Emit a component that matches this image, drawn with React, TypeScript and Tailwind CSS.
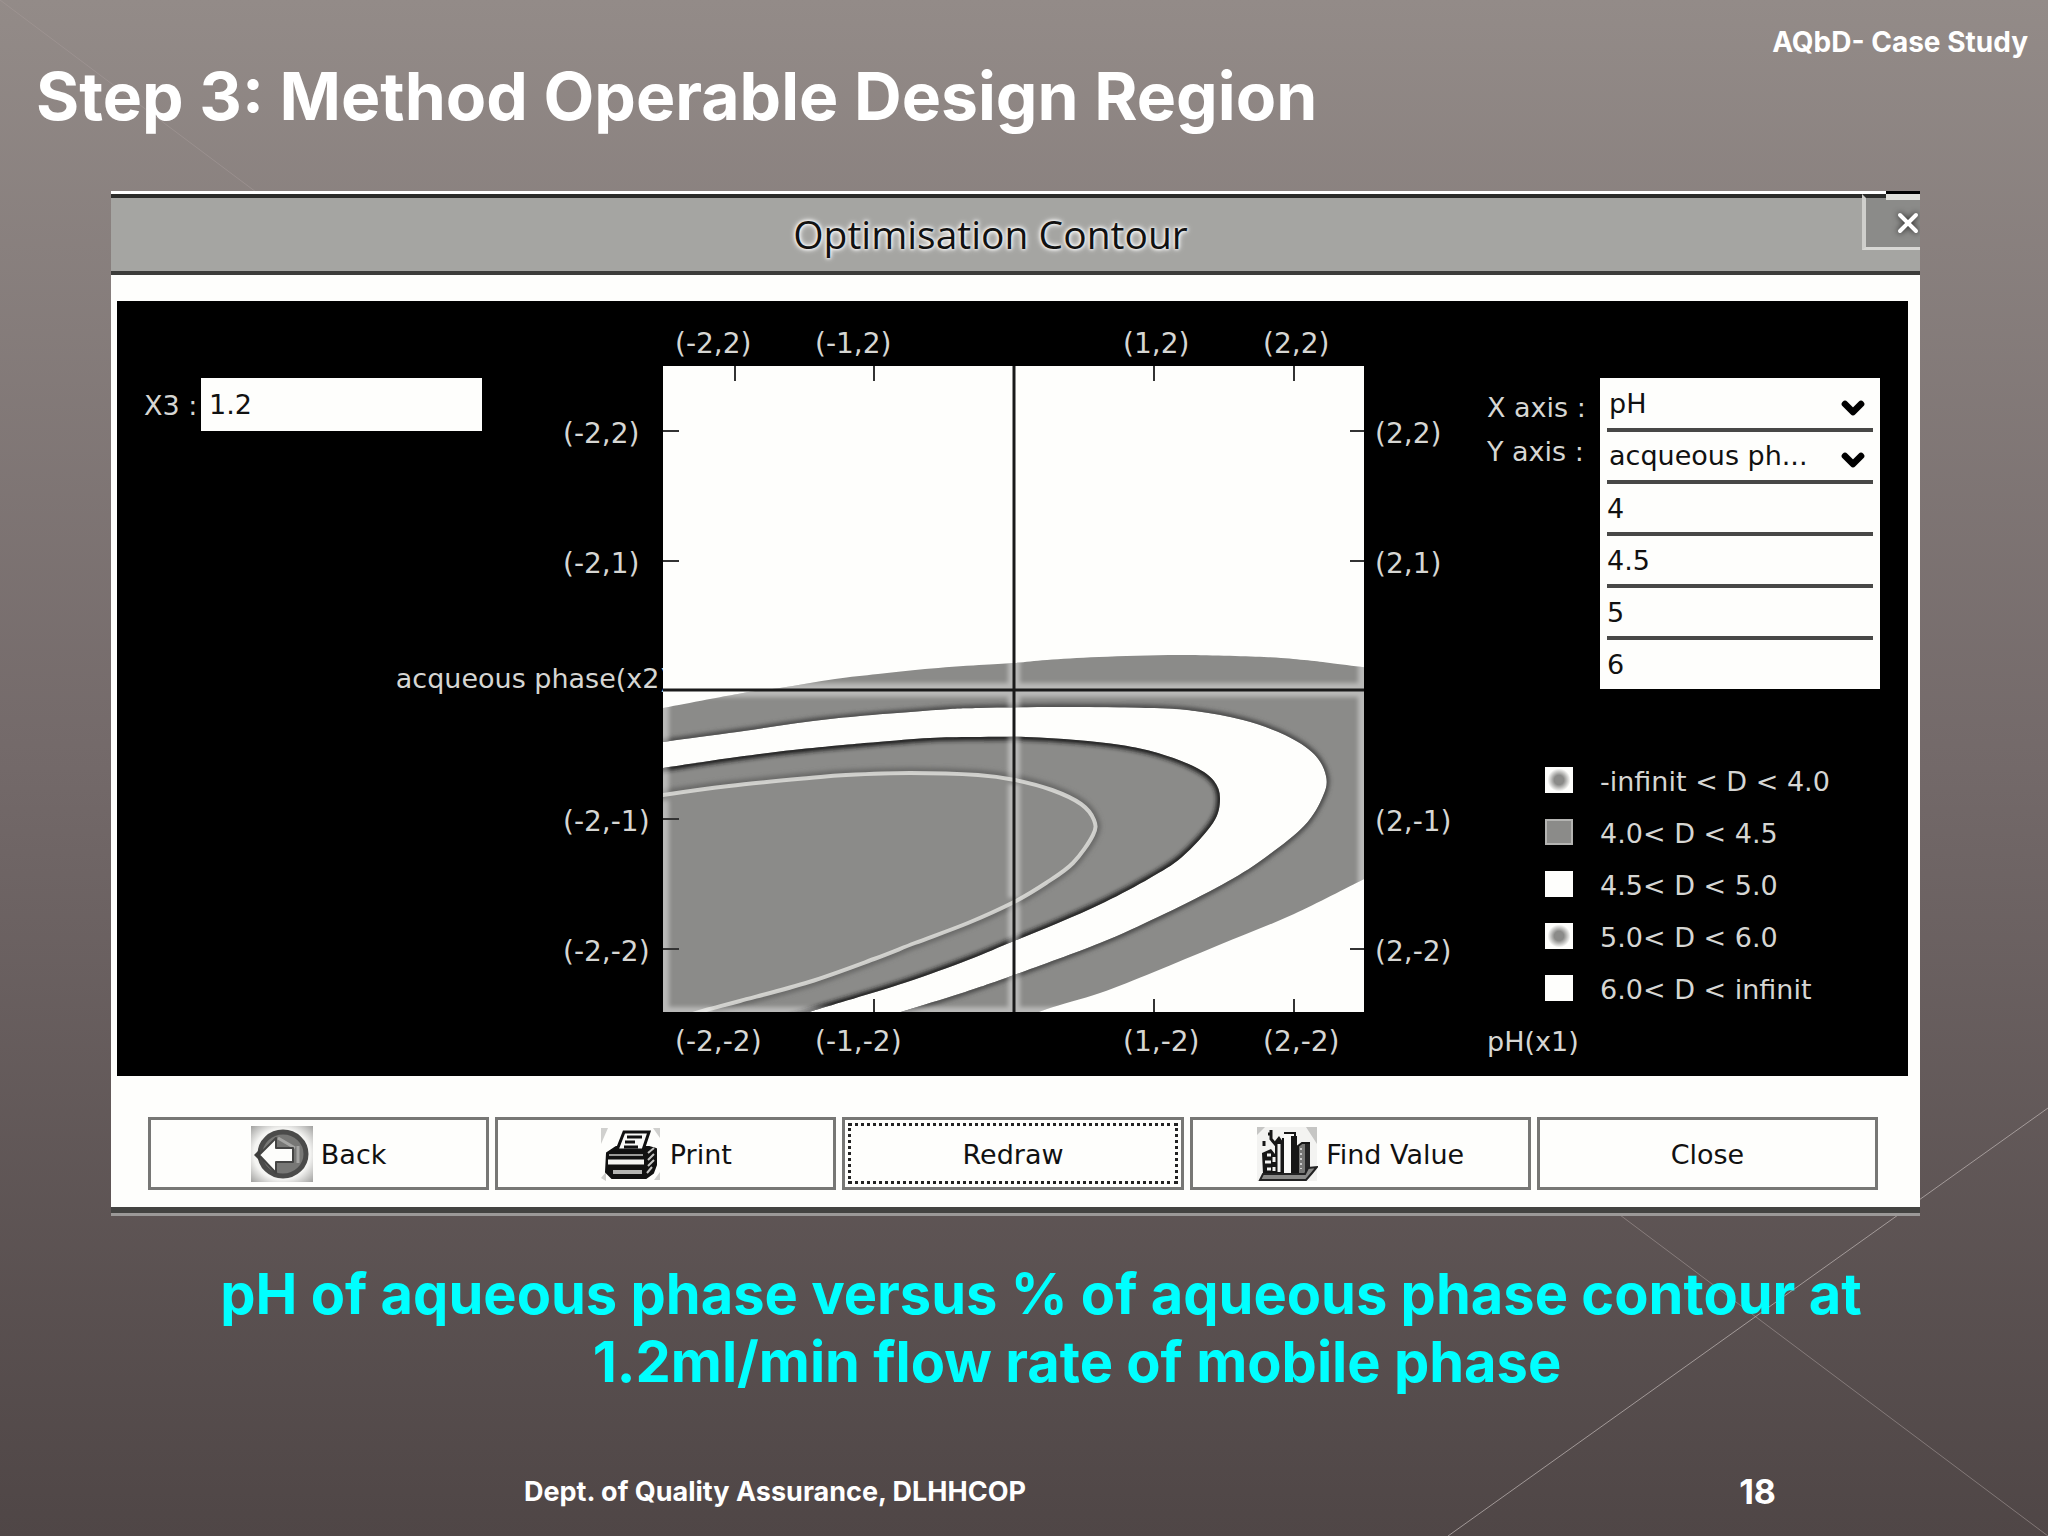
import { useState } from "react";
import type { ReactNode } from "react";
import { ChevronDown, X } from "lucide-react";

// ---------------------------------------------------------------------------
// Contour data (chart units)
// ---------------------------------------------------------------------------

type Point = [number, number];

const PLOT = { left: 663, right: 1364, top: 366, bottom: 1012, midX: 1014, midY: 690 };

const OUTER_TOP: Point[] = [
  [655, 710], [663, 708], [743, 693], [780, 688], [835, 679], [878, 674], [925, 669],
  [979, 665], [1014, 663], [1047, 660], [1099, 657], [1179, 655], [1264, 657],
  [1304, 660], [1330, 663], [1370, 668],
];

const OUTER_BOTTOM: Point[] = [
  [1370, 876], [1294, 914], [1219, 945], [1154, 972], [1100, 993], [1047, 1009], [1020, 1020],
];

const WHITE_BAND: Point[] = [
  [650, 745], [663, 742], [729, 733], [830, 719], [936, 710], [979, 708], [1060, 707],
  [1150, 708], [1195, 711], [1243, 720], [1285, 735], [1314, 754], [1326, 776],
  [1323, 796], [1304, 826], [1259, 862], [1216, 888], [1158, 917], [1100, 943],
  [1014, 975], [962, 993], [904, 1011], [880, 1019],
];

const INNER_BAND: Point[] = [
  [650, 771], [663, 768], [737, 757], [793, 750], [843, 745], [878, 742], [930, 738],
  [973, 737], [1026, 737], [1076, 740], [1121, 745], [1158, 753], [1195, 767],
  [1214, 781], [1220, 799], [1213, 823], [1182, 857], [1150, 878], [1105, 902],
  [1058, 923], [1014, 941], [968, 960], [904, 983], [819, 1009], [790, 1018],
];

const CORE: Point[] = [
  [650, 798], [663, 795], [729, 786], [809, 778], [846, 775], [910, 773], [978, 775],
  [1015, 780], [1052, 790], [1081, 804], [1094, 820], [1093, 835], [1073, 863],
  [1046, 883], [1014, 902], [968, 923], [915, 943], [874, 959], [809, 982],
  [740, 1001], [706, 1010], [680, 1018],
];

// Catmull-Rom spline through the points
function smooth(points: Point[], start = "M") {
  let d = `${start}${points[0][0]} ${points[0][1]}`;
  for (let i = 0; i < points.length - 1; i++) {
    const p0 = points[i - 1] ?? points[i];
    const p1 = points[i];
    const p2 = points[i + 1];
    const p3 = points[i + 2] ?? p2;
    d += `C${p1[0] + (p2[0] - p0[0]) / 6} ${p1[1] + (p2[1] - p0[1]) / 6} `;
    d += `${p2[0] - (p3[0] - p1[0]) / 6} ${p2[1] - (p3[1] - p1[1]) / 6} ${p2[0]} ${p2[1]}`;
  }
  return d;
}

const outerPath = smooth(OUTER_TOP) + smooth(OUTER_BOTTOM, "L") + "L650 1020Z";
const whitePath = smooth(WHITE_BAND) + "L650 1020Z";
const innerPath = smooth(INNER_BAND) + "L650 1020Z";

const X_TICKS = [
  { tick: 735, label: 675, top: "(-2,2)", bottom: "(-2,-2)" },
  { tick: 874, label: 815, top: "(-1,2)", bottom: "(-1,-2)" },
  { tick: 1154, label: 1123, top: "(1,2)", bottom: "(1,-2)" },
  { tick: 1294, label: 1263, top: "(2,2)", bottom: "(2,-2)" },
];

const Y_TICKS = [
  { tick: 431, left: "(-2,2)", right: "(2,2)" },
  { tick: 561, left: "(-2,1)", right: "(2,1)" },
  { tick: 819, left: "(-2,-1)", right: "(2,-1)" },
  { tick: 949, left: "(-2,-2)", right: "(2,-2)" },
];

function ContourChart() {
  return (
    <svg
      viewBox="555 301 915 775"
      className="block h-auto w-full overflow-visible text-[28px]"
      role="img"
      aria-label="Optimisation Contour"
    >
      <defs>
        <clipPath id="plot">
          <rect x={PLOT.left} y={PLOT.top} width={701} height={646} />
        </clipPath>
        <clipPath id="grey">
          <path d={outerPath + whitePath + innerPath} clipRule="evenodd" />
        </clipPath>
        <filter id="soft" x="-5%" y="-5%" width="110%" height="110%">
          <feGaussianBlur stdDeviation="2" />
        </filter>
      </defs>

      <g fill="#d6d6d3">
        <text x={670} y={688} textAnchor="end" className="text-[27px]">acqueous phase(x2)</text>
        {X_TICKS.map((t) => (
          <g key={t.tick}>
            <text x={t.label} y={353}>{t.top}</text>
            <text x={t.label} y={1051}>{t.bottom}</text>
          </g>
        ))}
        {Y_TICKS.map((t) => (
          <g key={t.tick}>
            <text x={563} y={t.tick + 12}>{t.left}</text>
            <text x={1375} y={t.tick + 12}>{t.right}</text>
          </g>
        ))}
      </g>

      <rect x={PLOT.left} y={PLOT.top} width={701} height={646} fill="#fefefc" />

      <g clipPath="url(#plot)">
        <path d={outerPath} fill="#8b8b89" />
        <path d={whitePath} fill="#fefefc" />
        <path d={innerPath} fill="#8b8b89" />

        {/* Shading along the band edges */}
        <g clipPath="url(#grey)" fill="none">
          <path d={smooth(WHITE_BAND)} stroke="#4a4a49" strokeWidth={6} filter="url(#soft)" />
          <path d={smooth(INNER_BAND)} stroke="#1e1e1e" strokeWidth={7} filter="url(#soft)" />
          <path d={smooth(CORE)} stroke="#6a6a69" strokeWidth={11} filter="url(#soft)" />
          <g stroke="#fff" strokeWidth={12} opacity={0.4} filter="url(#soft)">
            <path d="M1014 640V1020" />
            <path d="M650 690H1370" strokeWidth={14} />
            <path d="M664 690V1012H1363V660" strokeWidth={10} />
          </g>
        </g>
        <path d={smooth(CORE) + "L650 1020Z"} fill="#8b8b89" />
        <path d={smooth(CORE)} fill="none" stroke="#dededb" strokeWidth={4} opacity={0.85} />
        <g fill="none" stroke="#fff" opacity={0.4} filter="url(#soft)">
          <path d="M1014 784V898" strokeWidth={12} />
          <path d="M664 800V1012H712" strokeWidth={10} />
        </g>
      </g>

      {/* Tick marks */}
      <g stroke="#333" strokeWidth={2}>
        {X_TICKS.map((t) => (
          <path key={t.tick} d={`M${t.tick} ${PLOT.top}v15`} />
        ))}
        {X_TICKS.slice(1).map((t) => (
          <path key={t.tick} d={`M${t.tick} ${PLOT.bottom}v-13`} />
        ))}
        {Y_TICKS.map((t) => (
          <path
            key={t.tick}
            d={`M${PLOT.left} ${t.tick}h16${t.tick === 819 ? "" : `M${PLOT.right} ${t.tick}h-14`}`}
          />
        ))}
      </g>
      <path
        d={`M${PLOT.midX} ${PLOT.top}V${PLOT.bottom}M${PLOT.left} ${PLOT.midY}H${PLOT.right}`}
        stroke="#1a1a1a"
        strokeWidth={3}
      />
    </svg>
  );
}

// ---------------------------------------------------------------------------
// Toolbar icons
// ---------------------------------------------------------------------------

function BackIcon() {
  return (
    <svg width="62" height="56" viewBox="0 0 62 56" aria-hidden="true">
      <defs>
        <radialGradient id="back-corner" cx="50%" cy="50%" r="70%">
          <stop offset="0.65" stopColor="#f4f4f2" />
          <stop offset="1" stopColor="#a2a2a0" />
        </radialGradient>
      </defs>
      <rect width="62" height="56" fill="url(#back-corner)" />
      <ellipse cx="32" cy="28" rx="23" ry="22" fill="#777775" stroke="#4b4b4a" strokeWidth="5" />
      <path d="M27 12l17 10M47 20v17" stroke="#a5a5a3" strokeWidth="3" />
      <path
        d="M8 29L25 12v10h17v14H25v11z"
        fill="#fdfdfb"
        stroke="#444443"
        strokeWidth="2"
        strokeLinejoin="round"
      />
      <path d="M3 29l6-6v12z" fill="#3c3c3b" />
    </svg>
  );
}

function PrintIcon() {
  return (
    <svg width="62" height="56" viewBox="0 0 62 56" aria-hidden="true">
      <path d="M1 2h7l-7 16zM53 2h7v10zM1 52l5-6v9zM60 46v8h-6z" fill="#d0d0ce" />
      <path
        d="M7 27l9-6h33l7 2v16l-3 8-7 5H12l-6-6z"
        fill="#111"
        stroke="#111"
        strokeWidth="2"
        strokeLinejoin="round"
      />
      <path d="M24 6h25l-6 18H17z" fill="#fafaf8" stroke="#111" strokeWidth="3" />
      <path d="M27 11h15M25 16h10M24 21h14" stroke="#111" strokeWidth="3" />
      <path d="M9 29h34" stroke="#9a9a98" strokeWidth="2" />
      <path d="M8 36h36" stroke="#f4f4f2" strokeWidth="5" />
      <path d="M13 46h29" stroke="#b4b4b2" strokeWidth="4" />
      <path d="M48 27l6-5M48 34l6-6M48 40l6-6M47 47l5-6" stroke="#c4c4c2" strokeWidth="2" />
    </svg>
  );
}

function FindIcon() {
  return (
    <svg width="62" height="56" viewBox="0 0 62 56" aria-hidden="true">
      <path d="M1 1h60v54H1z" fill="#f3f3f1" />
      <path d="M50 1h11v17zM1 1h8L1 9z" fill="#c6c6c4" />
      <path d="M6 27l9-4 4 5V15l4-5 4 6v32H7z" fill="#161616" />
      <path d="M15 4v9l5 6M12 8h4M8 15v5" stroke="#161616" strokeWidth="3" fill="none" />
      <path d="M11 29h4M9 36h6M11 43h4M18 31v5M18 41v4" stroke="#f3f3f1" strokeWidth="3" />
      <path d="M23 18v28" stroke="#f3f3f1" strokeWidth="3" />
      <path d="M28 7h10v40H28z" fill="#fafaf8" />
      <path d="M28 7h11v4M27 12v35" stroke="#161616" strokeWidth="2" fill="none" />
      <path d="M35 10h6v38h-6z" fill="#161616" />
      <path d="M42 20l4-3h7v31H42z" fill="#777775" stroke="#161616" strokeWidth="2" />
      <path d="M49 18h5v30h-5z" fill="#262626" />
      <path d="M45 22v21" stroke="#ccc" strokeWidth="2" strokeDasharray="2 3" />
      <path d="M7 48h42l3-6 9-1-5 6-6 7H4z" fill="#8a8a88" stroke="#222" strokeWidth="2" />
    </svg>
  );
}

const BUTTONS: { label: string; icon?: ReactNode }[] = [
  { label: "Back", icon: <BackIcon /> },
  { label: "Print", icon: <PrintIcon /> },
  { label: "Redraw" },
  { label: "Find Value", icon: <FindIcon /> },
  { label: "Close" },
];

// ---------------------------------------------------------------------------
// Side controls
// ---------------------------------------------------------------------------

const LEGEND = [
  { label: "-infinit < D < 4.0", swatch: "bg-[radial-gradient(circle,#8b8b89_25%,#fefefc_60%)]" },
  { label: "4.0< D < 4.5", swatch: "border-2 border-[#b4b4b2] bg-[#8b8b89]" },
  { label: "4.5< D < 5.0", swatch: "bg-[#fefefc]" },
  { label: "5.0< D < 6.0", swatch: "bg-[radial-gradient(circle,#8b8b89_25%,#fefefc_60%)]" },
  { label: "6.0< D < infinit", swatch: "bg-[#fefefc]" },
];

function AxisSelect({ id, options }: { id: string; options: string[] }) {
  const [value, setValue] = useState(options[0]);
  return (
    <div className="relative h-[52px] border-b-4 border-[#484847]">
      <select
        id={id}
        value={value}
        onChange={(e) => setValue(e.target.value)}
        className="h-full w-full appearance-none bg-transparent pl-[2px] outline-none"
      >
        {options.map((o) => (
          <option key={o}>{o}</option>
        ))}
      </select>
      <ChevronDown
        className="pointer-events-none absolute right-1 top-3 size-8 text-black"
        strokeWidth={5}
      />
    </div>
  );
}

function Controls() {
  return (
    <div className="pt-[77px] pl-[17px]">
      <div className="flex">
        <div className="flex w-[113px] shrink-0 flex-col pt-2 leading-[44px] text-[#d6d6d3]">
          <label htmlFor="x-axis">X axis :</label>
          <label htmlFor="y-axis">Y axis :</label>
        </div>
        <div className="h-[311px] w-[280px] overflow-hidden bg-[#fefefc] px-[7px] pt-[2px] text-[#111]">
          <AxisSelect id="x-axis" options={["pH", "acqueous ph..."]} />
          <AxisSelect id="y-axis" options={["acqueous ph...", "pH"]} />
          {["4", "4.5", "5", "6"].map((level, i) => (
            <input
              key={level}
              aria-label={`Level ${i + 1}`}
              defaultValue={level}
              className="block h-[52px] w-full border-b-4 border-[#484847] bg-transparent outline-none last:border-transparent"
            />
          ))}
        </div>
      </div>

      <ul className="mt-[78px] flex flex-col gap-[26px] pl-[58px] leading-[30px] text-[#d6d6d3]">
        {LEGEND.map((item) => (
          <li key={item.label} className="flex h-[26px] gap-[27px]">
            <span className={`h-[26px] w-7 ${item.swatch}`} />
            <span className="whitespace-pre">{item.label}</span>
          </li>
        ))}
      </ul>
      <p className="mt-[26px] leading-[30px] text-[#d6d6d3]">pH(x1)</p>
    </div>
  );
}

function ContourDialog() {
  return (
    <section className="mr-32 ml-[111px] border-b-3 border-[#9b9998] bg-[#fefefc] font-['DejaVu_Sans',sans-serif] text-[27px]">
      <header className="relative flex h-[84px] items-stretch border-t-3 border-b-4 border-t-white border-b-[#3c3c3a] bg-[#a5a5a2]">
        <h2 className="flex-1 border-t-4 border-[#2c2c2a] pl-2 text-center font-['Open_Sans',sans-serif] text-[39px] leading-[72px] font-medium text-[#111] [text-shadow:0_0_4px_#fff,0_0_6px_#fff,0_0_3px_#fff]">
          Optimisation Contour
        </h2>
        <button
          aria-label="Close window"
          className="flex h-14 w-[58px] items-center justify-end overflow-hidden border-t-4 border-b-3 border-l-4 border-t-[#2c2c2a] border-b-[#d8d8d5] border-l-[#cfcfcc] bg-[#8b8b89] text-white"
        >
          <X className="-mr-1 size-8 shrink-0 drop-shadow-[0_0_3px_#222]" strokeWidth={3} />
        </button>
        {/* Notch over the close button */}
        <span className="absolute -top-[3px] right-0 h-[9px] w-[34px] border-t-3 border-black bg-[#deded9]" />
      </header>

      <div className="pt-[26px] pr-3 pl-[6px]">
        <div className="grid grid-cols-[438fr_915fr_438fr] bg-black">
          <div className="flex items-start pt-[77px] pl-[27px]">
            <label htmlFor="x3" className="w-[57px] leading-[55px] text-[#d6d6d3]">X3 :</label>
            <input
              id="x3"
              defaultValue="1.2"
              className="h-[53px] w-[281px] bg-[#fefefc] px-2 text-[#111] outline-none"
            />
          </div>
          <ContourChart />
          <Controls />
        </div>
      </div>

      <div className="flex gap-[6px] border-b-6 border-[#434341] pt-[41px] pr-[42px] pb-[17px] pl-[37px]">
        {BUTTONS.map((b) => (
          <button
            key={b.label}
            className="flex h-[73px] flex-1 basis-0 border-3 border-[#777775] p-[3px] text-[#111]"
          >
            <span
              className={`flex h-full w-full items-center justify-center gap-2 ${
                b.label === "Redraw" ? "border-3 border-dotted border-[#222]" : ""
              }`}
            >
              {b.icon}
              <span className="pt-1">{b.label}</span>
            </span>
          </button>
        ))}
      </div>
    </section>
  );
}

export default function App() {
  return (
    <main className="relative isolate flex min-h-screen flex-col bg-linear-to-b from-[#938b88] via-[#736969] via-50% to-[#4f4646] font-['Inter',sans-serif] font-bold text-white">
      {/* Diagonal rules behind the slide */}
      <svg
        className="absolute inset-0 -z-10 h-full w-full"
        viewBox="0 0 2048 1536"
        preserveAspectRatio="none"
        fill="none"
        aria-hidden="true"
      >
        <path d="M0 0L2048 1536" stroke="#a39a98" strokeOpacity="0.6" />
        <path d="M1448 1536L2048 1108" stroke="#b5adab" strokeOpacity="0.8" />
      </svg>

      <p className="pt-7 pr-5 text-right text-[28px] leading-7">AQbD- Case Study</p>
      <h1 className="pl-9 text-[66px] leading-[80px]">Step 3: Method Operable Design Region</h1>

      <div className="mt-[55px] font-normal">
        <ContourDialog />
      </div>

      <p className="mt-[44px] pl-[34px] text-center text-[56px] leading-[68px] text-[#00ffff]">
        <span className="block">pH of aqueous phase versus % of aqueous phase contour at</span>
        <span className="block pl-[72px]">1.2ml/min flow rate of mobile phase</span>
      </p>

      <footer className="mt-auto flex items-center justify-between pr-[272px] pb-[26px] pl-[524px]">
        <span className="text-[27px] leading-9">Dept. of Quality Assurance, DLHHCOP</span>
        <span className="text-[34px] leading-9">18</span>
      </footer>
    </main>
  );
}
